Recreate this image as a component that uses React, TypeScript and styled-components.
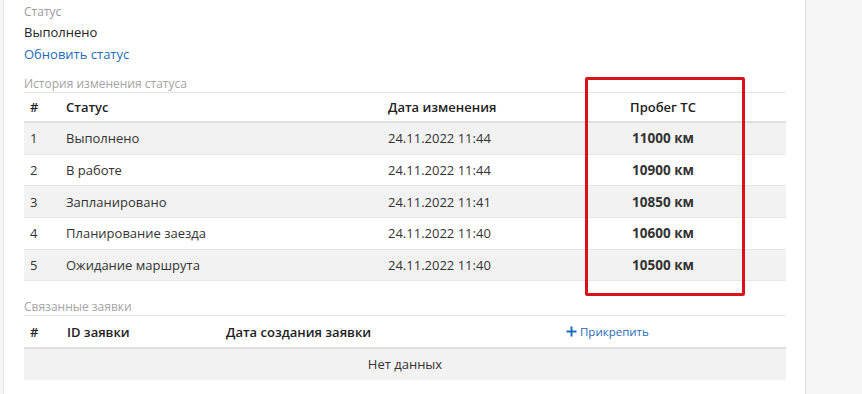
import styled, { createGlobalStyle } from "styled-components";

const GlobalStyle = createGlobalStyle`
  html, body {
    margin: 0;
    padding: 0;
    background: #f5f5f5;
    font-family: "Open Sans", "Noto Sans", sans-serif;
    color: #333;
  }
`;

const Page = styled.div`
  display: flex;
  height: 394px;
  overflow: hidden;
`;

const Panel = styled.div`
  position: relative;
  margin-left: 3px;
  width: 762px;
  padding: 3px 19px 0 20px;
  background: #fff;
  border-left: 1px solid #e6e6e6;
  border-right: 1px solid #dcdcdc;
`;

const Label = styled.div`
  font-size: 12px;
  line-height: 18px;
  color: #9a9a9a;
`;

const Value = styled.div`
  font-size: 13px;
  line-height: 22px;
  color: #222;
`;

const Link = styled.a`
  display: block;
  font-size: 13px;
  line-height: 22px;
  color: #1e6cb8;
  cursor: pointer;
`;

const SectionTitle = styled.div<{ $top: number }>`
  margin-top: ${(p) => p.$top}px;
  font-size: 12px;
  line-height: 17px;
  color: #a3a3a3;
  border-bottom: 1px solid #e3e3e3;
`;

const Row = styled.div<{ $cols: string; $height: number; $shade?: boolean; $head?: boolean }>`
  box-sizing: border-box;
  display: grid;
  grid-template-columns: ${(p) => p.$cols};
  align-items: center;
  height: ${(p) => p.$height}px;
  background: ${(p) => (p.$shade ? "#f2f2f2" : "#fff")};
  border-bottom: ${(p) => (p.$head ? "2px solid #dedede" : "1px solid #e6e6e6")};
  font-size: 13px;
  font-weight: ${(p) => (p.$head ? 600 : 400)};
  color: ${(p) => (p.$head ? "#222" : "#333")};
`;

const Cell = styled.div<{ $center?: boolean; $bold?: boolean }>`
  padding: 0 6px;
  white-space: nowrap;
  text-align: ${(p) => (p.$center ? "center" : "left")};
  font-weight: ${(p) => (p.$bold ? 700 : "inherit")};
  font-size: ${(p) => (p.$bold ? "13.5px" : "inherit")};
`;

const Empty = styled.div`
  height: 31px;
  line-height: 31px;
  background: #f2f2f2;
  text-align: center;
  font-size: 13px;
  color: #333;
`;

const Attach = styled.a`
  display: inline-flex;
  align-items: center;
  gap: 3px;
  font-size: 11.5px;
  font-weight: 400;
  color: #1e6cb8;
  cursor: pointer;
`;

const Highlight = styled.div`
  position: absolute;
  left: 581px;
  top: 77px;
  width: 154px;
  height: 213px;
  border: 3px solid #d8131c;
  border-radius: 2px;
  pointer-events: none;
`;

const Side = styled.div`
  flex: 1;
  background: #f5f5f5;
`;

const historyCols = "36px 322px 158px 1fr";
const linkedCols = "37px 159px 340px 1fr";

const history = [
  { status: "Выполнено", date: "24.11.2022 11:44", km: "11000 км" },
  { status: "В работе", date: "24.11.2022 11:44", km: "10900 км" },
  { status: "Запланировано", date: "24.11.2022 11:41", km: "10850 км" },
  { status: "Планирование заезда", date: "24.11.2022 11:40", km: "10600 км" },
  { status: "Ожидание маршрута", date: "24.11.2022 11:40", km: "10500 км" },
];

export default function App() {
  return (
    <Page>
      <GlobalStyle />
      <Panel>
        <Label>Статус</Label>
        <Value>Выполнено</Value>
        <Link>Обновить статус</Link>

        <SectionTitle $top={10}>История изменения статуса</SectionTitle>
        <Row $cols={historyCols} $height={30} $head>
          <Cell>#</Cell>
          <Cell>Статус</Cell>
          <Cell>Дата изменения</Cell>
          <Cell $center>Пробег ТС</Cell>
        </Row>
        {history.map((h, i) => (
          <Row key={i} $cols={historyCols} $height={31.7} $shade={i % 2 === 0}>
            <Cell>{i + 1}</Cell>
            <Cell>{h.status}</Cell>
            <Cell>{h.date}</Cell>
            <Cell $center $bold>
              {h.km}
            </Cell>
          </Row>
        ))}

        <SectionTitle $top={17}>Связанные заявки</SectionTitle>
        <Row $cols={linkedCols} $height={33} $head>
          <Cell>#</Cell>
          <Cell>ID заявки</Cell>
          <Cell>Дата создания заявки</Cell>
          <Cell>
            <Attach>
              <svg width="11" height="11" viewBox="0 0 11 11">
                <path d="M5.5 0.5v10M0.5 5.5h10" stroke="#1e6cb8" strokeWidth="2" />
              </svg>
              Прикрепить
            </Attach>
          </Cell>
        </Row>
        <Empty>Нет данных</Empty>

        <Highlight />
      </Panel>
      <Side />
    </Page>
  );
}
